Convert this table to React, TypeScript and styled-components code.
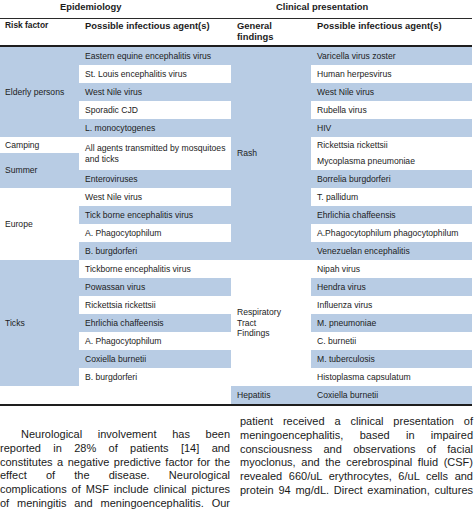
import React from "react";
import styled, { createGlobalStyle } from "styled-components";

const GlobalStyle = createGlobalStyle`
  html, body {
    margin: 0;
    padding: 0;
    background: #fff;
  }
  body {
    width: 474px;
    height: 514px;
    overflow: hidden;
    font-family: "Liberation Sans", Arial, sans-serif;
    color: #1c1c1c;
  }
`;

type Cell = { text: React.ReactNode; span?: number; blue?: boolean };

const riskFactors: Cell[] = [
  { text: "Elderly persons", span: 5, blue: true },
  { text: "Camping" },
  { text: "Summer", span: 2, blue: true },
  { text: "Europe", span: 4 },
  { text: "Ticks", span: 7, blue: true },
  { text: "" },
];

const epiAgents: Cell[] = [
  { text: "Eastern equine encephalitis virus", blue: true },
  { text: "St. Louis encephalitis virus" },
  { text: "West Nile virus", blue: true },
  { text: "Sporadic CJD" },
  { text: "L. monocytogenes", blue: true },
  {
    text: (
      <>
        All agents transmitted by mosquitoes
        <br />
        and ticks
      </>
    ),
    span: 2,
  },
  { text: "Enteroviruses", blue: true },
  { text: "West Nile virus" },
  { text: "Tick borne encephalitis virus", blue: true },
  { text: "A. Phagocytophilum" },
  { text: "B. burgdorferi", blue: true },
  { text: "Tickborne encephalitis virus" },
  { text: "Powassan virus", blue: true },
  { text: "Rickettsia rickettsii" },
  { text: "Ehrlichia chaffeensis", blue: true },
  { text: "A. Phagocytophilum" },
  { text: "Coxiella burnetii", blue: true },
  { text: "B. burgdorferi" },
  { text: "" },
];

const findings: Cell[] = [
  { text: "Rash", span: 12, blue: true },
  {
    text: (
      <>
        Respiratory
        <br />
        Tract
        <br />
        Findings
      </>
    ),
    span: 7,
  },
  { text: "Hepatitis", blue: true },
];

const clinAgents: Cell[] = [
  { text: "Varicella virus zoster", blue: true },
  { text: "Human herpesvirus" },
  { text: "West Nile virus", blue: true },
  { text: "Rubella virus" },
  { text: "HIV", blue: true },
  { text: "Rickettsia rickettsii" },
  { text: "Mycoplasma pneumoniae" },
  { text: "Borrelia burgdorferi", blue: true },
  { text: "T. pallidum" },
  { text: "Ehrlichia chaffeensis", blue: true },
  { text: "A.Phagocytophilum phagocytophilum" },
  { text: "Venezuelan encephalitis", blue: true },
  { text: "Nipah virus" },
  { text: "Hendra virus", blue: true },
  { text: "Influenza virus" },
  { text: "M. pneumoniae", blue: true },
  { text: "C. burnetii" },
  { text: "M. tuberculosis", blue: true },
  { text: "Histoplasma capsulatum" },
  { text: "Coxiella burnetii", blue: true },
];

const leftText = [
  "Neurological involvement has been",
  "reported in 28% of patients [14] and",
  "constitutes a negative predictive factor for the",
  "effect of the disease. Neurological",
  "complications of MSF include clinical pictures",
  "of meningitis and meningoencephalitis. Our",
];

const rightText = [
  "patient received a clinical presentation of",
  "meningoencephalitis, based in impaired",
  "consciousness and observations of facial",
  "myoclonus, and the cerebrospinal fluid (CSF)",
  "revealed 660/uL erythrocytes, 6/uL cells and",
  "protein 94 mg/dL. Direct examination, cultures",
];

const COLS = "79px 152px 80px 161px";

const Page = styled.div`
  width: 474px;
  display: flex;
  flex-direction: column;
`;

const Table = styled.div`
  width: 472px;
  display: flex;
  flex-direction: column;
`;

const GroupRow = styled.div`
  display: grid;
  grid-template-columns: 231px 241px;
  height: 18px;
  border-bottom: 1px solid #2a2a2a;
`;

const GroupTitle = styled.div<{ $indent: number }>`
  padding-left: ${(p) => p.$indent}px;
  font-size: 9.4px;
  font-weight: bold;
  line-height: 13px;
`;

const HeaderRow = styled.div`
  display: grid;
  grid-template-columns: ${COLS};
  height: 26px;
  border-bottom: 2px solid #1e1e1e;
`;

const HeadCell = styled.div<{ $size: number }>`
  padding: 1px 0 0 ${(p) => (p.$size < 9 ? 5 : 6)}px;
  font-size: ${(p) => p.$size}px;
  font-weight: bold;
  line-height: 11px;
`;

const Body = styled.div`
  display: grid;
  grid-template-columns: ${COLS};
  grid-template-rows: repeat(5, 18px) 16px 17px repeat(13, 18px);
  border-bottom: 2px solid #1e1e1e;
`;

const BodyCell = styled.div<{
  $col: number;
  $row: number;
  $span: number;
  $blue: boolean;
}>`
  grid-column: ${(p) => p.$col};
  grid-row: ${(p) => p.$row} / span ${(p) => p.$span};
  background: ${(p) => (p.$blue ? "#b8cce4" : "#ffffff")};
  display: flex;
  align-items: center;
  padding-left: ${(p) => (p.$col === 1 ? 5 : 6)}px;
  font-size: 8.6px;
  line-height: 10.5px;
`;

const Prose = styled.div`
  display: grid;
  grid-template-columns: 230px 233px;
  column-gap: 10px;
  margin-top: 9px;
  font-size: 11px;
  line-height: 13.8px;
  color: #1a1a1a;
`;

const Column = styled.div<{ $offset: number }>`
  padding-top: ${(p) => p.$offset}px;
`;

const Line = styled.div<{ $indent?: boolean }>`
  text-align: justify;
  text-align-last: justify;
  text-indent: ${(p) => (p.$indent ? 21 : 0)}px;
`;

const renderColumn = (cells: Cell[], col: number) => {
  let row = 1;
  return cells.map((c, i) => {
    const span = c.span ?? 1;
    const start = row;
    row += span;
    return (
      <BodyCell
        key={`${col}-${i}`}
        $col={col}
        $row={start}
        $span={span}
        $blue={!!c.blue}
      >
        <span>{c.text}</span>
      </BodyCell>
    );
  });
};

export default function App() {
  return (
    <Page>
      <GlobalStyle />
      <Table>
        <GroupRow>
          <GroupTitle $indent={60}>Epidemiology</GroupTitle>
          <GroupTitle $indent={45}>Clinical presentation</GroupTitle>
        </GroupRow>
        <HeaderRow>
          <HeadCell $size={8.4}>Risk factor</HeadCell>
          <HeadCell $size={9.4}>Possible infectious agent(s)</HeadCell>
          <HeadCell $size={9.4}>
            General
            <br />
            findings
          </HeadCell>
          <HeadCell $size={9.4}>Possible infectious agent(s)</HeadCell>
        </HeaderRow>
        <Body>
          {renderColumn(riskFactors, 1)}
          {renderColumn(epiAgents, 2)}
          {renderColumn(findings, 3)}
          {renderColumn(clinAgents, 4)}
        </Body>
      </Table>
      <Prose>
        <Column $offset={13}>
          {leftText.map((t, i) => (
            <Line key={i} $indent={i === 0}>
              {t}
            </Line>
          ))}
        </Column>
        <Column $offset={0}>
          {rightText.map((t, i) => (
            <Line key={i}>{t}</Line>
          ))}
        </Column>
      </Prose>
    </Page>
  );
}
